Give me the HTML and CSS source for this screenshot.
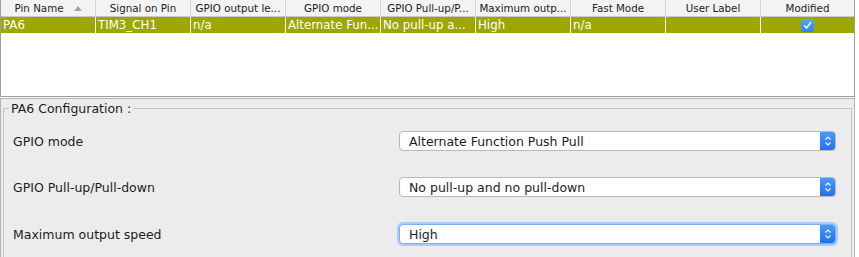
FILE: index.html
```html
<!DOCTYPE html>
<html lang="en">
<head>
    <meta charset="UTF-8">
    <title>Pin Configuration</title>
    <link rel="stylesheet" href="styles.css">
</head>
<body>
    <div class="pin-table">
        <div class="grid head">
            <div class="cell sorted"><span>Pin Name</span><i class="sort-arrow"></i></div>
            <div class="cell">Signal on Pin</div>
            <div class="cell">GPIO output le...</div>
            <div class="cell">GPIO mode</div>
            <div class="cell">GPIO Pull-up/P...</div>
            <div class="cell">Maximum outp...</div>
            <div class="cell">Fast Mode</div>
            <div class="cell">User Label</div>
            <div class="cell">Modified</div>
        </div>
        <div class="grid row selected">
            <div class="cell">PA6</div>
            <div class="cell">TIM3_CH1</div>
            <div class="cell">n/a</div>
            <div class="cell">Alternate Fun...</div>
            <div class="cell">No pull-up a...</div>
            <div class="cell">High</div>
            <div class="cell">n/a</div>
            <div class="cell"></div>
            <div class="cell center">
                <span class="checkbox">
                    <svg width="9" height="9" viewBox="0 0 9 9"><path d="M1.5 4.8 L3.6 7 L7.6 1.6" fill="none" stroke="#fff" stroke-width="1.5" stroke-linecap="round" stroke-linejoin="round"/></svg>
                </span>
            </div>
        </div>
    </div>

    <div class="panel">
        <fieldset class="config">
            <legend>PA6 Configuration :</legend>
            <div class="form">
                <label>GPIO mode</label>
                <div class="select"><span>Alternate Function Push Pull</span><b class="arrows"><svg width="8" height="12" viewBox="0 0 8 12"><path d="M1.5 4.5 L4 2 L6.5 4.5 M1.5 7.5 L4 10 L6.5 7.5" fill="none" stroke="#fff" stroke-width="1.2"/></svg></b></div>

                <label>GPIO Pull-up/Pull-down</label>
                <div class="select"><span>No pull-up and no pull-down</span><b class="arrows"><svg width="8" height="12" viewBox="0 0 8 12"><path d="M1.5 4.5 L4 2 L6.5 4.5 M1.5 7.5 L4 10 L6.5 7.5" fill="none" stroke="#fff" stroke-width="1.2"/></svg></b></div>

                <label class="last">Maximum output speed</label>
                <div class="select focused last"><span>High</span><b class="arrows"><svg width="8" height="12" viewBox="0 0 8 12"><path d="M1.5 4.5 L4 2 L6.5 4.5 M1.5 7.5 L4 10 L6.5 7.5" fill="none" stroke="#fff" stroke-width="1.2"/></svg></b></div>
            </div>
        </fieldset>
    </div>
</body>
</html>
```

FILE: styles.css
```css
* {
    margin: 0;
    padding: 0;
    box-sizing: border-box;
}

body {
    font-family: 'DejaVu Sans', 'Liberation Sans', sans-serif;
    background: #ffffff;
    color: #1c1c1c;
    width: 859px;
    height: 257px;
    overflow: hidden;
}

/* pin table */

.pin-table {
    width: 855px;
    height: 97px;
    border-left: 1px solid #9c9c9c;
    border-right: 1px solid #9c9c9c;
    border-bottom: 1px solid #9c9c9c;
    background: #fff;
}

.grid {
    display: grid;
    grid-template-columns: repeat(8, 95px) 93px;
}

.head {
    height: 17px;
    background: #f3f3f3;
    border-bottom: 1px solid #c9c9c9;
    font-size: 10.3px;
    line-height: 16px;
    color: #222;
}

.head .cell {
    text-align: center;
    border-right: 1px solid #d4d4d4;
    white-space: nowrap;
    overflow: hidden;
}

.head .cell:last-child {
    border-right: none;
}

.head .sorted {
    display: flex;
    align-items: center;
    justify-content: center;
    gap: 10px;
}

.sort-arrow {
    width: 0;
    height: 0;
    border-left: 4px solid transparent;
    border-right: 4px solid transparent;
    border-bottom: 5px solid #a2a2a2;
}

.row {
    height: 16px;
    font-size: 11.8px;
    line-height: 16px;
}

.row.selected {
    background: #9ea600;
    color: #fff;
}

.row .cell {
    padding-left: 2px;
    border-right: 1px solid #fff;
    white-space: nowrap;
    overflow: hidden;
}

.row .cell:last-child {
    border-right: none;
}

.row .center {
    display: flex;
    align-items: center;
    justify-content: center;
    padding-left: 0;
}

.checkbox {
    width: 13px;
    height: 13px;
    border-radius: 3px;
    background: linear-gradient(#5aa6ff, #2a84f7);
    display: flex;
    align-items: center;
    justify-content: center;
}

/* configuration panel */

.panel {
    width: 855px;
    height: 159px;
    margin-top: 1px;
    background: #ececec;
    border: 1px solid #b4b4b4;
    border-bottom: none;
    padding: 2px 2px 0 2px;
    overflow: hidden;
}

.config {
    height: 170px;
    border: 1px solid #c6c6c6;
    padding: 0 15px 0 5px;
    font-size: 12.5px;
}

.config legend {
    padding: 0 2px;
    line-height: 15px;
    color: #1c1c1c;
}

.form {
    display: grid;
    grid-template-columns: 1fr 437px;
    grid-auto-rows: 20px;
    row-gap: 26px;
    align-items: center;
    padding: 15px 0 0 4px;
}

.form .last {
    margin-top: 2px;
}

.form label {
    color: #1c1c1c;
}

.select {
    height: 20px;
    background: #fff;
    border: 1px solid #b9b9b9;
    border-radius: 4px;
    display: flex;
    align-items: center;
    justify-content: space-between;
    overflow: hidden;
}

.select span {
    padding-left: 9px;
}

.select .arrows {
    width: 16px;
    height: 20px;
    margin: -1px -1px -1px 0;
    background: linear-gradient(#4f9bfb, #1b6ff3);
    display: flex;
    align-items: center;
    justify-content: center;
}

.select.focused {
    border-color: #7fb0ee;
    box-shadow: 0 0 0 2px #a9cbf7;
}
```
